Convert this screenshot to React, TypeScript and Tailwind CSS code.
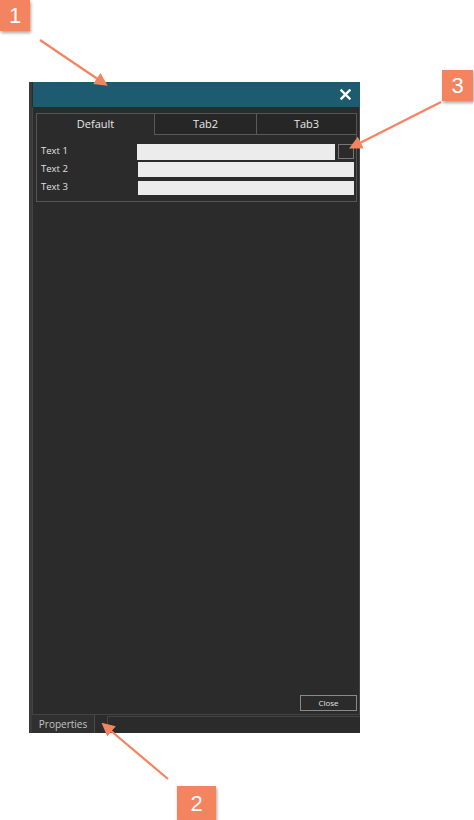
import React from "react";

function Callout({ n, className }: { n: string; className: string }) {
  return (
    <div
      className={`absolute flex items-center justify-center bg-[#f4845f] text-white text-[22px] shadow-[1px_2px_3px_rgba(0,0,0,0.35)] ${className}`}
      style={{ fontFamily: '"Liberation Sans", Arial, sans-serif' }}
    >
      {n}
    </div>
  );
}

export default function App() {
  return (
    <div
      className="relative w-[474px] h-[820px] bg-white overflow-hidden"
      style={{ fontFamily: '"Open Sans", "Noto Sans", sans-serif' }}
    >
      <div className="pt-[82px] pl-[29px]">
        <div className="w-[331px] h-[651px] flex flex-col bg-[#2b2b2b] border-l-[3px] border-[#3a3a3a]">
          {/* Title bar */}
          <div className="h-[25px] bg-[#1d5b70] flex items-center justify-end pr-[9px] border-l border-[#2b2b2b]">
            <svg width="11" height="11" viewBox="0 0 11 11">
              <path d="M1.5 1.5 L9.5 9.5 M9.5 1.5 L1.5 9.5" stroke="white" strokeWidth="2.4" strokeLinecap="square" />
            </svg>
          </div>
          {/* Body */}
          <div className="flex-1 flex flex-col border-l border-r border-b border-[#444] pl-[3px] pr-[2px] pt-[6px] pb-[3px]">
            <div className="border border-[#555] pb-[6px]">
              <div className="flex h-[21px] text-[11px] text-[#e8e8e8]">
                <div className="w-[117px] flex items-center justify-center">Default</div>
                <div className="w-[102px] flex items-center justify-center border-l border-b border-[#5a5a5a] bg-[#262626]">Tab2</div>
                <div className="flex-1 flex items-center justify-center border-l border-b border-[#5a5a5a] bg-[#262626]">Tab3</div>
              </div>
              <div className="flex flex-col gap-[3px] pt-[9px] pl-[4px] pr-[2px] text-[9.5px] text-[#e0e0e0]">
                <div className="flex items-center h-[15px]">
                  <div className="w-[97px]">Text 1</div>
                  <div className="w-[200px] h-[16px] bg-[#ececec]" />
                  <div className="ml-[3px] w-[16px] h-[15px] border border-[#777] bg-[#2b2b2b]" />
                </div>
                <div className="flex items-center h-[15px]">
                  <div className="w-[97px]">Text 2</div>
                  <div className="flex-1 h-[15px] bg-[#ececec]" />
                </div>
                <div className="flex items-center h-[15px]">
                  <div className="w-[97px]">Text 3</div>
                  <div className="flex-1 h-[14px] bg-[#ececec]" />
                </div>
              </div>
            </div>
            <div className="flex-1" />
            <div className="flex justify-end">
              <div className="w-[57px] h-[16px] border border-[#8a8a8a] flex items-center justify-center text-[8px] text-[#e0e0e0]">
                Close
              </div>
            </div>
          </div>
          {/* Bottom tab strip */}
          <div className="h-[18px] flex">
            <div className="w-[63px] flex items-center justify-center text-[10px] text-[#c4c4c4] bg-[#303030] border-r border-[#4a4a4a]">
              Properties
            </div>
            <div className="flex-1 ml-[12px] border-l border-t border-[#444] mt-[1px]" />
          </div>
        </div>
      </div>

      {/* Annotation arrows */}
      <svg className="absolute left-0 top-0 pointer-events-none" width="474" height="820">
        <defs>
          <marker id="ah" markerWidth="6" markerHeight="6" refX="4.5" refY="3" orient="auto">
            <path d="M0 0 L6 3 L0 6 Z" fill="#f4845f" />
          </marker>
        </defs>
        <line x1="40" y1="40" x2="105" y2="84" stroke="#f4845f" strokeWidth="2.2" markerEnd="url(#ah)" />
        <line x1="441" y1="102" x2="352" y2="147" stroke="#f4845f" strokeWidth="2.2" markerEnd="url(#ah)" />
        <line x1="168" y1="779" x2="104" y2="725" stroke="#f4845f" strokeWidth="2.2" markerEnd="url(#ah)" />
      </svg>

      <Callout n="1" className="left-0 top-0 w-[30px] h-[31px]" />
      <Callout n="3" className="left-[442px] top-[70px] w-[31px] h-[31px]" />
      <Callout n="2" className="left-[177px] top-[786px] w-[39px] h-[34px]" />
    </div>
  );
}
